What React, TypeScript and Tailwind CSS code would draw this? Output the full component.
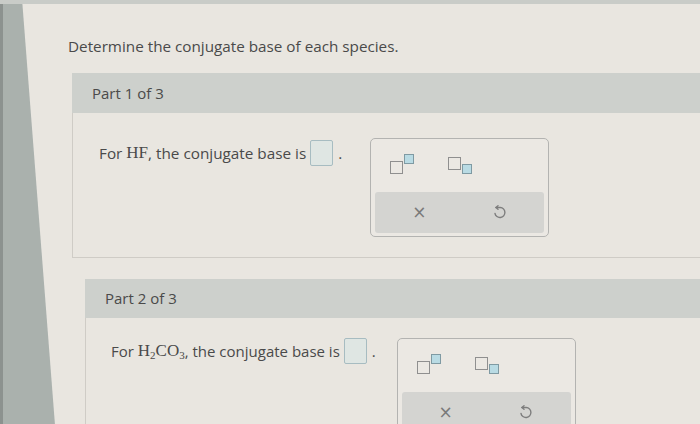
import React from "react";

function SupIcon() {
  return (
    <div className="relative w-[25px] h-[20px]">
      <div className="absolute left-0 bottom-0 w-[13px] h-[13px] border-[1.5px] border-[#8f8f8f]" />
      <div className="absolute left-[14px] top-0 w-[10px] h-[10px] border-[1.5px] border-[#7f9aa3] bg-[#b9dbe4]" />
    </div>
  );
}

function SubIcon() {
  return (
    <div className="relative w-[24px] h-[17px]">
      <div className="absolute left-0 top-0 w-[13px] h-[13px] border-[1.5px] border-[#8f8f8f]" />
      <div className="absolute left-[14px] bottom-0 w-[10px] h-[10px] border-[1.5px] border-[#7f9aa3] bg-[#b9dbe4]" />
    </div>
  );
}

function UndoIcon() {
  return (
    <svg width="14" height="15" viewBox="0 0 14 15" fill="none" stroke="#7d7d7d" strokeWidth="1.4" strokeLinecap="round">
      <path d="M4 2.5 H8.2 A5 5 0 1 1 3 8.5" />
      <path d="M6 0.8 L4 2.5 L6 4.2" />
    </svg>
  );
}

function Toolbox() {
  return (
    <div className="w-[179px] h-[99px] rounded-[5px] border border-[#b3b3b1] bg-[#ebe8e3] px-[4px] pt-[13px] flex flex-col">
      <div className="flex items-end h-[22px] pl-[15px] gap-[33px]">
        <SupIcon />
        <SubIcon />
      </div>
      <div className="mt-[18px] h-[41px] rounded-[3px] bg-[#d4d4d1] flex items-center">
        <div className="w-[84px] flex justify-center pl-[4px]">
          <span className="text-[#7a7a7a] text-[17px] leading-none font-['DejaVu_Sans',sans-serif]">×</span>
        </div>
        <div className="flex-1 flex justify-center pr-[6px]">
          <UndoIcon />
        </div>
      </div>
    </div>
  );
}

function AnswerBox() {
  return <span className="inline-block w-[23px] h-[26px] border border-[#a7bcc1] bg-[#dfe6e3] rounded-[2px] align-middle" />;
}

export default function App() {
  return (
    <div className="w-[700px] h-[424px] overflow-hidden bg-[#e9e6e0] flex flex-col font-['Open_Sans',sans-serif] text-[#4a4a4a]">
      <div className="h-[4px] shrink-0 bg-[#c9ccc8]" />
      <div className="flex flex-1">
        <div className="w-[56px] shrink-0 bg-[#aab1ad] border-l-[3px] border-[#8c928f] [clip-path:polygon(0_0,40%_0,100%_100%,0_100%)]" />
        <div className="flex-1 flex flex-col pl-[12px]">
          <p className="mt-[33px] text-[15.25px] leading-[18px]">Determine the conjugate base of each species.</p>

          <section className="mt-[18px] ml-[4px]">
            <div className="h-[40px] bg-[#cdd0cc] flex items-center pl-[20px] text-[15px]">Part 1 of 3</div>
            <div className="h-[145px] border-l border-b border-[#cfccc6] flex pl-[26px] pt-[25px]">
              <div className="flex items-center h-[30px] text-[15.3px]">
                <span>For&nbsp;</span>
                <span className="font-['Liberation_Serif',serif] text-[17px]">HF</span>
                <span>, the conjugate base is&nbsp;</span>
                <AnswerBox />
                <span className="ml-[5px]">.</span>
              </div>
              <div className="ml-[28px]">
                <Toolbox />
              </div>
            </div>
          </section>

          <section className="mt-[21px] ml-[17px]">
            <div className="h-[39px] bg-[#cdd0cc] flex items-center pl-[20px] text-[15px]">Part 2 of 3</div>
            <div className="h-[120px] border-l border-[#cfccc6] flex pl-[25px] pt-[18px]">
              <div className="flex items-center h-[30px] text-[15px]">
                <span>For&nbsp;</span>
                <span className="font-['Liberation_Serif',serif] text-[17px]">
                  H<sub className="text-[11px]">2</sub>CO<sub className="text-[11px]">3</sub>
                </span>
                <span>, the conjugate base is&nbsp;</span>
                <AnswerBox />
                <span className="ml-[5px]">.</span>
              </div>
              <div className="ml-[21px] mt-[2px]">
                <Toolbox />
              </div>
            </div>
          </section>
        </div>
      </div>
    </div>
  );
}
